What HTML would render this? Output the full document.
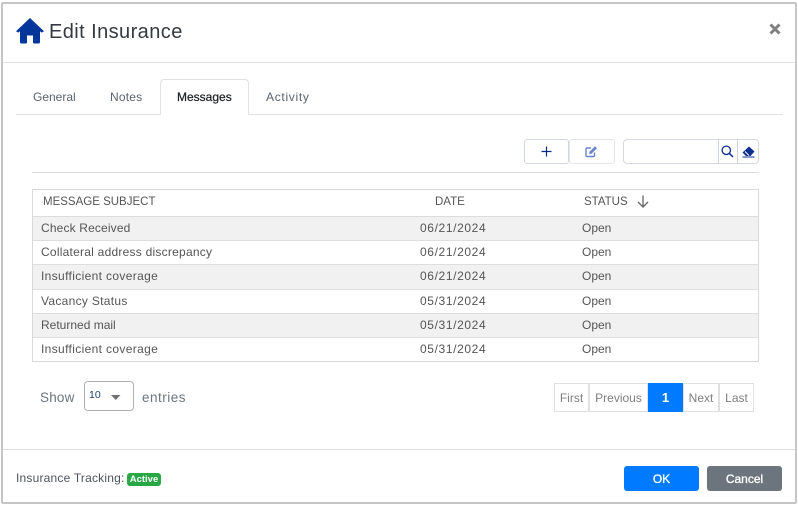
<!DOCTYPE html>
<html><head><meta charset="utf-8"><style>
html,body{margin:0;padding:0;background:#fff}
body{width:798px;height:507px;position:relative;overflow:hidden;font-family:"Liberation Sans",sans-serif;color:#495057}
.a{position:absolute;box-sizing:border-box}
.t{position:absolute;white-space:nowrap;font-size:12px;line-height:16px;color:#555}
.c{text-align:center}
.d{letter-spacing:.62px}
.m{-webkit-text-stroke:.3px #fff}
svg{position:absolute;display:block}
</style></head><body>
<div class="a" style="left:1px;top:2px;width:796px;height:502px;border:2px solid #c6c6c6;border-radius:2px"></div>
<svg style="left:16px;top:18px" width="28" height="26" viewBox="0 0 28 26"><path d="M14 0 L28 13.2 L25.7 14.6 L24 13.2 V24 Q24 25.5 22.5 25.5 H18 Q17 25.5 17 24.5 V17.5 H11 V24.5 Q11 25.5 10 25.5 H5.5 Q4 25.5 4 24 V13.2 L2.3 14.6 L0 13.2 Z" fill="#03369b"/></svg>
<div class="t" style="left:49px;top:19px;font-size:20px;line-height:26px;color:#343a40;letter-spacing:.42px">Edit Insurance</div>
<svg style="left:769px;top:23px" width="12" height="12" viewBox="0 0 12 12"><path d="M1.5 1.5L10.5 10.5M10.5 1.5L1.5 10.5" stroke="#808080" stroke-width="3"/></svg>
<div class="a" style="left:3px;top:62px;width:792px;height:1px;background:#dfe0e8"></div>
<div class="a" style="left:16px;top:114px;width:767px;height:1px;background:#dee2e6"></div>
<div class="a" style="left:160px;top:79px;width:89px;height:36px;background:#fff;border:1px solid #dee2e6;border-bottom:none;border-radius:4px 4px 0 0"></div>
<div class="t" style="left:33px;top:89px;color:#5b6270">General</div>
<div class="t" style="left:110px;top:89px;color:#5b6270;letter-spacing:.2px">Notes</div>
<div class="t" style="left:177px;top:89px;color:#212529;-webkit-text-stroke:.25px #212529">Messages</div>
<div class="t" style="left:266px;top:89px;color:#5b6270;letter-spacing:.7px">Activity</div>
<div class="a" style="left:524px;top:139px;width:45px;height:25px;border:1px solid #d3d7de;border-radius:3px"></div>
<svg style="left:541px;top:146px" width="11" height="11" viewBox="0 0 11 11"><path d="M5.5 .5V10.5M.5 5.5H10.5" stroke="#0b2a83" stroke-width="1.2"/></svg>
<div class="a" style="left:569px;top:139px;width:46px;height:25px;border:1px solid #e2e5ea;border-radius:3px"></div>
<svg style="left:585px;top:145px" width="13" height="13" viewBox="0 0 13 13"><path d="M9.5 7.5V10.5Q9.5 11.5 8.5 11.5H2Q1 11.5 1 10.5V4Q1 3 2 3H6" fill="none" stroke="#6b86cf" stroke-width="1.4"/><path d="M4.5 6.8L10 1.2L12 3.2L6.5 8.8L4.2 9.2Z" fill="#6b86cf"/></svg>
<div class="a" style="left:623px;top:139px;width:136px;height:25px;border:1px solid #d5d9df;border-radius:4px"></div>
<div class="a" style="left:718px;top:139px;width:1px;height:25px;background:#ced4da"></div>
<div class="a" style="left:737px;top:139px;width:1px;height:25px;background:#ced4da"></div>
<svg style="left:721px;top:145px" width="13" height="13" viewBox="0 0 13 13"><circle cx="5.3" cy="5.3" r="4.2" fill="none" stroke="#0a2f8f" stroke-width="1.3"/><path d="M8.3 8.3L12 12" stroke="#0a2f8f" stroke-width="1.5"/></svg>
<svg style="left:742px;top:146px" width="13" height="12" viewBox="0 0 13 12"><path d="M7 .5L12.5 5.5L8.5 10H4L.5 6.5Z" fill="#0a2f8f"/><path d="M3 5.5L7 9.5" stroke="#fff" stroke-width="1"/><path d="M.5 11H12.5" stroke="#0a2f8f" stroke-width="1"/></svg>
<div class="a" style="left:32px;top:172px;width:727px;height:1px;background:#dcdcdc"></div>
<div class="a" style="left:32px;top:189px;width:727px;height:173px;border:1px solid #d9d9d9"></div>
<div class="a" style="left:33px;top:216px;width:725px;height:1px;background:#dcdcdc"></div>
<div class="a" style="left:33px;top:217px;width:725px;height:23px;background:#f1f1f1"></div>
<div class="a" style="left:33px;top:240px;width:725px;height:1px;background:#dedede"></div>
<div class="a" style="left:33px;top:264px;width:725px;height:1px;background:#dedede"></div>
<div class="a" style="left:33px;top:265px;width:725px;height:24px;background:#f1f1f1"></div>
<div class="a" style="left:33px;top:289px;width:725px;height:1px;background:#dedede"></div>
<div class="a" style="left:33px;top:313px;width:725px;height:1px;background:#dedede"></div>
<div class="a" style="left:33px;top:314px;width:725px;height:23px;background:#f1f1f1"></div>
<div class="a" style="left:33px;top:337px;width:725px;height:1px;background:#dedede"></div>
<div class="t" style="left:43px;top:194px;font-size:11.5px">MESSAGE SUBJECT</div>
<div class="t" style="left:435px;top:194px;font-size:11.5px">DATE</div>
<div class="t" style="left:584px;top:194px;font-size:11.5px">STATUS</div>
<svg style="left:637px;top:195px" width="12" height="13" viewBox="0 0 12 13"><path d="M6 .5V12M1 7L6 12L11 7" fill="none" stroke="#666" stroke-width="1.3"/></svg>
<div class="t" style="left:41px;top:220px;letter-spacing:.15px">Check Received</div><div class="t d" style="left:420px;top:220px">06/21/2024</div><div class="t" style="left:582px;top:220px">Open</div>
<div class="t" style="left:41px;top:244px;letter-spacing:.24px">Collateral address discrepancy</div><div class="t d" style="left:420px;top:244px">06/21/2024</div><div class="t" style="left:582px;top:244px">Open</div>
<div class="t" style="left:41px;top:268px;letter-spacing:.35px">Insufficient coverage</div><div class="t d" style="left:420px;top:268px">06/21/2024</div><div class="t" style="left:582px;top:268px">Open</div>
<div class="t" style="left:41px;top:293px;letter-spacing:.3px">Vacancy Status</div><div class="t d" style="left:420px;top:293px">05/31/2024</div><div class="t" style="left:582px;top:293px">Open</div>
<div class="t" style="left:41px;top:317px">Returned mail</div><div class="t d" style="left:420px;top:317px">05/31/2024</div><div class="t" style="left:582px;top:317px">Open</div>
<div class="t" style="left:41px;top:341px;letter-spacing:.35px">Insufficient coverage</div><div class="t d" style="left:420px;top:341px">05/31/2024</div><div class="t" style="left:582px;top:341px">Open</div>
<div class="t" style="left:40px;top:390px;font-size:13.5px;color:#6c757d;letter-spacing:.2px">Show</div>
<div class="a" style="left:84px;top:381px;width:50px;height:30px;border:1px solid #aeb2b6;border-radius:4px"></div>
<div class="t" style="left:89px;top:388px;font-size:10.5px;line-height:14px;color:#1c3f66">10</div>
<svg style="left:111px;top:395px" width="10" height="5" viewBox="0 0 10 5"><path d="M0 0H9.5L4.75 5Z" fill="#707070"/></svg>
<div class="t" style="left:142px;top:390px;font-size:13.5px;color:#6c757d;letter-spacing:.5px">entries</div>
<div class="a" style="left:554px;top:383px;width:35px;height:29px;border:1px solid #e0e0e0"></div>
<div class="a" style="left:589px;top:383px;width:59px;height:29px;border:1px solid #e0e0e0"></div>
<div class="a" style="left:683px;top:383px;width:36px;height:29px;border:1px solid #e0e0e0"></div>
<div class="a" style="left:719px;top:383px;width:35px;height:29px;border:1px solid #e0e0e0"></div>
<div class="a" style="left:648px;top:383px;width:35px;height:29px;background:#007bff"></div>
<div class="t c" style="left:554px;width:35px;top:390px;color:#808080">First</div>
<div class="t c" style="left:589px;width:59px;top:390px;color:#808080">Previous</div>
<div class="t c" style="left:648px;width:35px;top:390px;color:#fff;font-weight:bold;font-size:13px">1</div>
<div class="t c" style="left:683px;width:36px;top:390px;color:#808080">Next</div>
<div class="t c" style="left:719px;width:35px;top:390px;color:#808080">Last</div>
<div class="a" style="left:3px;top:449px;width:792px;height:1px;background:#dedede"></div>
<div class="t" style="left:16px;top:470px;color:#4d5359;letter-spacing:.2px">Insurance Tracking:</div>
<div class="a" style="left:127px;top:473px;width:34px;height:13px;background:#28a745;border-radius:3px"></div>
<div class="t c" style="left:127px;width:34px;top:473px;font-size:9.5px;line-height:13px;font-weight:bold;color:#fff">Active</div>
<div class="a" style="left:624px;top:466px;width:75px;height:25px;background:#007bff;border-radius:3px"></div>
<div class="t c m" style="left:624px;width:75px;top:471px;color:#fff">OK</div>
<div class="a" style="left:707px;top:466px;width:75px;height:25px;background:#6c757d;border-radius:3px"></div>
<div class="t c m" style="left:707px;width:75px;top:471px;color:#fff">Cancel</div>
</body></html>
